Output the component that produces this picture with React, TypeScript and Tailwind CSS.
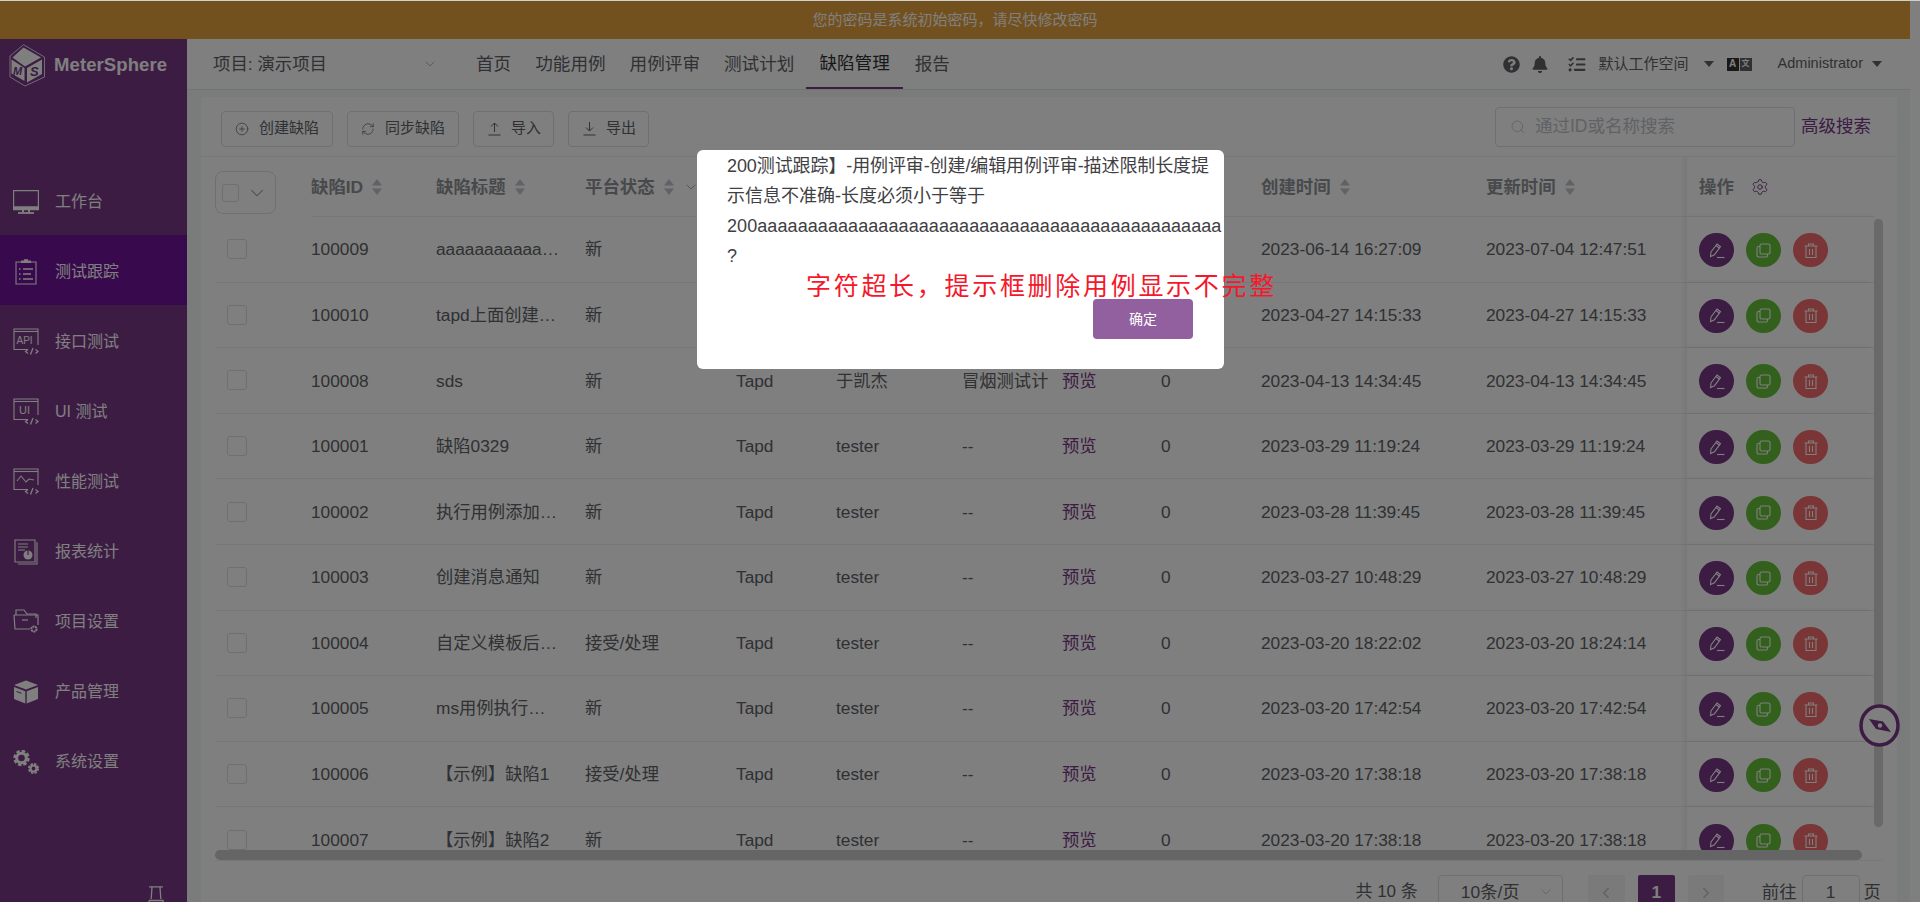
import { ChevronDown, ChevronLeft, ChevronRight, CirclePlus, RefreshCw, Search, Settings } from "lucide-react";
import { FaBell, FaQuestionCircle } from "react-icons/fa";
import { FaListCheck } from "react-icons/fa6";

const navItems = ["首页", "功能用例", "用例评审", "测试计划", "缺陷管理", "报告"];

// widths of the columns that the dialog covers in the header
const hiddenColumns = ["w-[100px]", "w-[126px]", "w-[100px]", "w-[99px]", "w-[100px]"];

const rows = [
  ["100009", "aaaaaaaaaaa…", "新", "", "", "", "2023-06-14 16:27:09", "2023-07-04 12:47:51"],
  ["100010", "tapd上面创建…", "新", "", "", "", "2023-04-27 14:15:33", "2023-04-27 14:15:33"],
  ["100008", "sds", "新", "Tapd", "于凯杰", "冒烟测试计", "2023-04-13 14:34:45", "2023-04-13 14:34:45"],
  ["100001", "缺陷0329", "新", "Tapd", "tester", "--", "2023-03-29 11:19:24", "2023-03-29 11:19:24"],
  ["100002", "执行用例添加…", "新", "Tapd", "tester", "--", "2023-03-28 11:39:45", "2023-03-28 11:39:45"],
  ["100003", "创建消息通知", "新", "Tapd", "tester", "--", "2023-03-27 10:48:29", "2023-03-27 10:48:29"],
  ["100004", "自定义模板后…", "接受/处理", "Tapd", "tester", "--", "2023-03-20 18:22:02", "2023-03-20 18:24:14"],
  ["100005", "ms用例执行…", "新", "Tapd", "tester", "--", "2023-03-20 17:42:54", "2023-03-20 17:42:54"],
  ["100006", "【示例】缺陷1", "接受/处理", "Tapd", "tester", "--", "2023-03-20 17:38:18", "2023-03-20 17:38:18"],
  ["100007", "【示例】缺陷2", "新", "Tapd", "tester", "--", "2023-03-20 17:38:18", "2023-03-20 17:38:18"],
];

function Logo() {
  return (
    <svg width="38" height="43" viewBox="0 0 38 43" fill="none">
      <path d="M14.5 .7 35.5 13v20L16 42 1 33V12Z" stroke="#fff" strokeWidth="0.8" />
      <path d="M14.5 3.5 32 13.5 16 22.5 3.5 13.5Z" fill="#fff" />
      <path d="M2.5 15.5 15.5 24v13L2.5 29.500Z" fill="#fff" />
      <path d="M18 24 33 15.500V30L18 38.500Z" fill="#fff" />
      <text x="4" y="31" fontSize="11" fontWeight="700" fontStyle="italic" fill="#783887" fontFamily="Liberation Sans">M</text>
      <text x="21" y="32" fontSize="13" fontWeight="700" fontStyle="italic" fill="#783887" fontFamily="Liberation Sans">S</text>
    </svg>
  );
}

function WindowIcon({ children }: { children: React.ReactNode }) {
  return (
    <svg width="26" height="27" viewBox="0 0 26 27" fill="none" stroke="#fff" strokeWidth="1.1">
      <path d="M15 21.500H1V1h24v16" />
      <path d="M1 3.500h24" />
      {children}
      <path d="M15 21.500l-2.500 2 2.500 2M22.500 21.500l2.500 2-2.500 2M20 20l-2.500 6.500" strokeWidth="1.3" />
    </svg>
  );
}

function SideIcon({ name }: { name: string }) {
  if (name === "工作台") {
    return (
      <svg width="26" height="24" viewBox="0 0 26 24" fill="none" stroke="#fff" strokeWidth="1.2">
        <path d="M.6.6h24.800v19H.6Z" />
        <path d="M.6 18h24.800" strokeWidth="3.500" />
        <path d="M10 20v2M16 20v2" strokeWidth="2" />
        <path d="M5 23h16" strokeWidth="1.800" />
      </svg>
    );
  }
  if (name === "测试跟踪") {
    return (
      <svg width="22" height="26" viewBox="0 0 22 26" fill="none" stroke="#fff" strokeWidth="1.1">
        <path d="M7 3H1v22h20V3h-6" />
        <path d="M6.500 3.500V2h3V.8h3V2h3v1.500Z" fill="#fff" />
        <path d="M8 10h10M8 15h8M8 20h10" strokeWidth="1.300" />
        <path d="M4 10h1.500M4 15h1.500M4 20h1.500" strokeWidth="1.300" />
      </svg>
    );
  }
  if (name === "接口测试") {
    return (
      <WindowIcon>
        <text x="3.500" y="15.500" fontSize="10" fill="#fff" stroke="none" fontFamily="Liberation Sans">API</text>
      </WindowIcon>
    );
  }
  if (name === "UI 测试") {
    return (
      <WindowIcon>
        <text x="6" y="16" fontSize="11" fill="#fff" stroke="none" fontFamily="Liberation Sans">UI</text>
      </WindowIcon>
    );
  }
  if (name === "性能测试") {
    return (
      <WindowIcon>
        <path d="M4 13l4-5 5 6 3-3 5 1" />
      </WindowIcon>
    );
  }
  if (name === "报表统计") {
    return (
      <svg width="24" height="26" viewBox="0 0 24 26" fill="none" stroke="#fff" strokeWidth="1.1">
        <path d="M1 1h20v22H1Z" />
        <path d="M23 3v22H4" />
        <path d="M4 5h10M4 8h10M4 11h7" strokeWidth="1.200" />
        <circle cx="14" cy="16" r="4.500" fill="#fff" stroke="none" />
        <path d="M14 16V10.500h5.500" stroke="#783887" />
      </svg>
    );
  }
  if (name === "项目设置") {
    return (
      <svg width="26" height="25" viewBox="0 0 26 25" fill="none" stroke="#fff" strokeWidth="1.2">
        <path d="M3 6V1h8l3 4h9v4" />
        <path d="M1 6h24v10M17 20H2L1 6" />
        <path d="M9 11h6" />
        <circle cx="21" cy="20" r="2.600" strokeWidth="2" strokeDasharray="2 .6" />
      </svg>
    );
  }
  if (name === "产品管理") {
    return (
      <svg width="26" height="24" viewBox="0 0 26 24" fill="#fff">
        <path d="M13 .5 25 5l-12 4.500L1 5Z" />
        <path d="M1 7l11.300 4.200V23.500L1 19Z" />
        <path d="M25 7l-11.300 4.200V23.500L25 19Z" />
        <path d="M3.500 11.500l5 1.800" stroke="#783887" strokeWidth="1" />
      </svg>
    );
  }
  return (
    <svg width="26" height="24" viewBox="0 0 26 24" fill="none" stroke="#fff">
      <circle cx="8.500" cy="8" r="4.800" strokeWidth="3" />
      <circle cx="8.500" cy="8" r="7" strokeWidth="2.400" strokeDasharray="3.500 1.990" />
      <circle cx="20.500" cy="18.500" r="3" strokeWidth="2.200" />
      <circle cx="20.500" cy="18.500" r="4.600" strokeWidth="1.800" strokeDasharray="2.400 1.210" />
    </svg>
  );
}

function Pin() {
  return (
    <svg width="16" height="18" viewBox="0 0 16 18" fill="none" stroke="#fff" strokeWidth="1.300">
      <path d="M1 .8h14M4 1l-.8 12M12 1l.8 12M1 14.500h14L15 18M1 14.500 1 18" />
    </svg>
  );
}

function Caret() {
  return (
    <svg width="10" height="6" viewBox="0 0 10 6" fill="#606266">
      <path d="M0 0h10L5 6Z" />
    </svg>
  );
}

function SortCaret() {
  return (
    <svg width="12" height="16" viewBox="0 0 12 16" fill="#c0c4cc" className="ml-[8px]">
      <path d="M6 0l5 6.500H1Z" />
      <path d="M6 16l5-6.500H1Z" />
    </svg>
  );
}

function Translate() {
  return (
    <div className="flex gap-[1px] font-bold leading-[12px] text-white">
      <span className="flex h-[13px] w-[12px] items-center justify-center bg-[#303133] text-[10px]">A</span>
      <span className="flex h-[13px] w-[12px] items-center justify-center bg-[#606266] text-[8px]">文</span>
    </div>
  );
}

function UpDownIcon({ down }: { down?: boolean }) {
  return (
    <svg width="13" height="15" viewBox="0 0 13 15" fill="none" stroke="#606266" strokeWidth="1">
      {down ? <path d="M6.500 1v9M3 6.500l3.500 3.500L10 6.500" /> : <path d="M6.500 11V2M3 5.500 6.500 2 10 5.500" />}
      <path d="M.5 14h12" />
    </svg>
  );
}

function ToolButton({ width, icon, label }: { width: string; icon: React.ReactNode; label: string }) {
  return (
    <button className={`mt-[4px] flex h-[36px] ${width} items-center gap-[10px] rounded-[4px] border border-[#dcdfe6] pl-[13px] text-[15px] text-[#606266]`}>
      <span className="flex w-[14px] justify-center">{icon}</span>
      {label}
    </button>
  );
}

function CheckBox({ className }: { className: string }) {
  return <div className={`rounded-[3px] border border-[#dcdfe6] bg-white ${className}`} />;
}

function HeaderCell({ width, label }: { width: string; label?: string }) {
  return (
    <div className={`flex h-full items-center border-b border-[#ebeef5] pt-[1px] text-[17.4px] font-bold text-[#909399] ${width}`}>
      {label}
      {label && <SortCaret />}
    </div>
  );
}

function ActionButtons() {
  return (
    <div className="flex gap-[12px]">
      <div className="flex h-[34px] w-[35px] items-center justify-center rounded-full bg-[#783887]">
        <svg width="16" height="17" viewBox="0 0 16 17" fill="none" stroke="#fff" strokeWidth="1.100">
          <path d="M1.500 14.500 2 10l6-8 3.500 2.700-6 8Z" />
          <path d="M7 3.500l3.500 2.700" />
          <path d="M8 15.500h7.500" />
        </svg>
      </div>
      <div className="flex h-[34px] w-[35px] items-center justify-center rounded-full bg-[#67c23a]">
        <svg width="15" height="15" viewBox="0 0 15 15" fill="none" stroke="#fff" strokeWidth="1.100">
          <rect x="4" y="1" width="10" height="10" rx="1.500" />
          <path d="M4 3.500H2.500A1.500 1.500 0 0 0 1 5v7.500A1.500 1.500 0 0 0 2.500 14H10a1.500 1.500 0 0 0 1.500-1.500V11" />
        </svg>
      </div>
      <div className="flex h-[34px] w-[35px] items-center justify-center rounded-full bg-[#f56c6c]">
        <svg width="14" height="15" viewBox="0 0 14 15" fill="none" stroke="#fff" strokeWidth="1.100">
          <path d="M.5 3h13M4.500 3V1h5v2M2 3v11.500h10V3M5.500 6v6M8.500 6v6" />
        </svg>
      </div>
    </div>
  );
}

function Sidebar() {
  const items = ["工作台", "测试跟踪", "接口测试", "UI 测试", "性能测试", "报表统计", "项目设置", "产品管理", "系统设置"];
  return (
    <aside className="flex h-[863px] w-[187px] shrink-0 flex-col bg-[#783887] text-white">
      <div className="flex h-[126px] shrink-0 items-start gap-[7px] pl-[9px] pt-[5px]">
        <Logo />
        <span className="mt-[9px] text-[18.500px] font-bold leading-[24px] tracking-[0.1px]">MeterSphere</span>
      </div>
      {items.map((item) => (
        <div key={item} className={`flex h-[70px] shrink-0 items-center pt-[3px] ${item === "测试跟踪" ? "bg-[#701298]" : ""}`}>
          <div className="flex w-[55px] shrink-0 justify-center pr-[3px]">
            <SideIcon name={item} />
          </div>
          <span className="text-[16px]">{item}</span>
        </div>
      ))}
      <div className="ml-[148px] mt-auto h-[16px] overflow-hidden">
        <Pin />
      </div>
    </aside>
  );
}

function TopBar() {
  return (
    <header className="flex h-[51px] shrink-0 items-center border-b border-[#e6e6e6] pl-[26px] pr-[28px]">
      <span className="w-[214px] pt-[1px] text-[17.400px] text-[#606266]">项目: 演示项目</span>
      <ChevronDown className="-ml-[5px] h-[16px] w-[16px] text-[#a0a4aa]" strokeWidth={1.200} />
      <div className="ml-[38px] flex h-full gap-[24px]">
        {navItems.map((item) => (
          <div
            key={item}
            className={`flex h-full items-center text-[17.600px] ${
              item === "缺陷管理"
                ? "-mx-[12px] border-b-2 border-[#783887] px-[13px] text-[#303133]"
                : "text-[#606266]"
            }`}
          >
            {item}
          </div>
        ))}
      </div>
      <div className="ml-auto flex items-center text-[#606266]">
        <FaQuestionCircle className="h-[17px] w-[17px]" />
        <FaBell className="ml-[12px] h-[17px] w-[16px]" />
        <FaListCheck className="ml-[20px] h-[17px] w-[18px]" />
        <span className="ml-[13px] text-[15px]">默认工作空间</span>
        <span className="ml-[15px]">
          <Caret />
        </span>
        <span className="ml-[13px]">
          <Translate />
        </span>
        <span className="ml-[26px] text-[14.500px]">Administrator</span>
        <span className="ml-[9px]">
          <Caret />
        </span>
      </div>
    </header>
  );
}

function BugTable() {
  return (
    <div className="relative mx-[14px]">
      <div className="h-[693px] w-[1659px] overflow-hidden">
        <div className="flex h-[60px]">
          <div className="w-[96px] shrink-0 pt-[14px]">
            <div className="flex h-[43px] w-[61px] items-center rounded-[8px] border border-[#dcdfe6] pl-[6px]">
              <CheckBox className="h-[18px] w-[17px]" />
              <ChevronDown className="ml-[7px] h-[22px] w-[22px] text-[#909399]" strokeWidth={1.100} />
            </div>
          </div>
          <HeaderCell width="w-[125px]" label="缺陷ID" />
          <HeaderCell width="w-[149px]" label="缺陷标题" />
          <div className="flex h-full w-[151px] items-center border-b border-[#ebeef5] pt-[1px] text-[17.400px] font-bold text-[#909399]">
            平台状态
            <SortCaret />
            <ChevronDown className="ml-[8px] h-[16px] w-[16px] text-[#909399]" strokeWidth={1.200} />
          </div>
          {hiddenColumns.map((width, i) => (
            <HeaderCell key={i} width={width} />
          ))}
          <HeaderCell width="w-[225px]" label="创建时间" />
          <HeaderCell width="w-[201px]" label="更新时间" />
          <div className="flex h-full w-[187px] items-center border-b border-[#ebeef5] bg-white pt-[1px] pl-[12px] text-[17.400px] font-bold text-[#909399] shadow-[-3px_0_6px_rgba(0,0,0,0.08)]">
            操作
            <Settings className="ml-[17px] h-[18px] w-[18px] text-[#783887]" strokeWidth={1.300} />
          </div>
        </div>
        {rows.map((row, i) => (
          <div key={row[0]} className="flex h-[65.600px] items-center border-b border-[#ebeef5] text-[17.300px] text-[#606266]">
            <div className="w-[96px] shrink-0 pl-[12px]">
              <CheckBox className="h-[20px] w-[20px]" />
            </div>
            <div className="w-[125px] pt-[2px]">{row[0]}</div>
            <div className="w-[149px] pt-[2px]">{row[1]}</div>
            <div className="w-[151px] pt-[2px]">{row[2]}</div>
            <div className="w-[100px] pt-[2px]">{row[3]}</div>
            <div className="w-[126px] pt-[2px]">{row[4]}</div>
            <div className="w-[100px] whitespace-nowrap pt-[2px]">{row[5]}</div>
            <div className="w-[99px] pt-[2px] text-[#783887]">{i > 1 && "预览"}</div>
            <div className="w-[100px] pt-[2px]">{i > 1 && "0"}</div>
            <div className="w-[225px] pt-[2px]">{row[6]}</div>
            <div className="w-[201px] pt-[2px]">{row[7]}</div>
            <div className="flex h-full w-[187px] items-center bg-white pl-[12px] pt-[2px] shadow-[-3px_0_6px_rgba(0,0,0,0.08)]">
              <ActionButtons />
            </div>
          </div>
        ))}
      </div>
      <div className="h-[11px] border-b border-[#ebeef5]">
        <div className="h-[10px] w-[1647px] rounded-full bg-[#cacaca]" />
      </div>
      <div className="absolute left-[1659px] top-[62px] h-[608px] w-[9px] rounded-full bg-[#d2d2d2]" />
    </div>
  );
}

function Pagination() {
  return (
    <div className="flex items-start justify-end pr-[16px] pt-[14px] text-[17.400px] leading-[20px] text-[#606266]">
      <span className="pt-[7px] text-[17px]">共 10 条</span>
      <div className="ml-[20px] flex h-[36px] w-[125px] items-center justify-between rounded-[4px] border border-[#dcdfe6] pb-[2px] pl-[22px] pr-[8px]">
        10条/页
        <ChevronDown className="h-[16px] w-[16px] text-[#c0c4cc]" strokeWidth={1.300} />
      </div>
      <div className="ml-[25px] flex h-[36px] w-[37px] items-center justify-center rounded-[2px] bg-[#f4f4f5] text-[#c0c4cc]">
        <ChevronLeft className="h-[18px] w-[18px]" />
      </div>
      <div className="ml-[13px] flex h-[36px] w-[37px] items-center justify-center rounded-[2px] bg-[#783887] pb-[2px] font-bold text-white">1</div>
      <div className="ml-[13px] flex h-[36px] w-[36px] items-center justify-center rounded-[2px] bg-[#f4f4f5] text-[#c0c4cc]">
        <ChevronRight className="h-[18px] w-[18px]" />
      </div>
      <span className="ml-[38px] pt-[7px]">前往</span>
      <div className="ml-[5px] flex h-[36px] w-[58px] items-center justify-center rounded-[4px] border border-[#dcdfe6] pb-[2px]">1</div>
      <span className="ml-[4px] pt-[7px]">页</span>
    </div>
  );
}

function Compass() {
  return (
    <svg width="41" height="43" viewBox="0 0 41 43" className="absolute left-[1859px] top-[704px]">
      <ellipse cx="20.500" cy="21.500" rx="18.500" ry="19.500" fill="#fff" stroke="#783887" strokeWidth="3.500" />
      <path d="M10 15 24 17.500 32 28 17 25Z" fill="#783887" />
      <circle cx="21" cy="21.500" r="2.200" fill="#fff" />
    </svg>
  );
}

export default function App() {
  return (
    <div className="relative h-[902px] w-[1920px] overflow-hidden bg-white font-['Liberation_Sans','Noto_Sans_CJK_SC',sans-serif]">
      <div className="relative z-20 h-[1px] bg-[#d0d0d0]" />
      <div className="flex h-[38px] w-[1910px] items-center justify-center bg-[#e6a23c] text-[15px] text-white">
        您的密码是系统初始密码，请尽快修改密码
      </div>
      <div className="flex w-[1910px]">
        <Sidebar />
        <div className="flex h-[863px] min-w-0 flex-1 flex-col">
          <TopBar />
          <main className="min-h-0 flex-1 bg-[#f5f6f7] pl-[14px] pr-[13px] pt-[7px]">
            <div className="rounded-[4px] bg-white">
              <div className="flex h-[60px] items-center gap-[14px] border-b border-[#ebeef5] pl-[20px] pr-[26px]">
                <ToolButton width="w-[112px]" icon={<CirclePlus className="h-[14px] w-[14px]" strokeWidth={1.200} />} label="创建缺陷" />
                <ToolButton width="w-[112px]" icon={<RefreshCw className="h-[14px] w-[14px]" strokeWidth={1.200} />} label="同步缺陷" />
                <ToolButton width="w-[81px]" icon={<UpDownIcon />} label="导入" />
                <ToolButton width="w-[81px]" icon={<UpDownIcon down />} label="导出" />
                <div className="ml-auto flex h-[40px] w-[300px] items-center rounded-[4px] border border-[#dcdfe6] pl-[14px] text-[17.500px] text-[#c0c4cc]">
                  <Search className="h-[16px] w-[16px]" strokeWidth={1.300} />
                  <span className="ml-[9px]">通过ID或名称搜索</span>
                </div>
                <span className="-ml-[8px] text-[17.500px] text-[#783887]">高级搜索</span>
              </div>
              <BugTable />
              <Pagination />
            </div>
          </main>
        </div>
      </div>
      <Compass />
      <div className="absolute inset-x-0 bottom-0 top-[1px] z-10 bg-black/50" />
      <div className="absolute left-[697px] top-[150px] z-20 h-[219px] w-[527px] rounded-[6px] bg-white pl-[30px] pt-[1px] text-[18px] leading-[30px] text-[#3f4044]">
        <div className="whitespace-nowrap tracking-[-0.1px]">200测试跟踪】-用例评审-创建/编辑用例评审-描述限制长度提</div>
        <div className="whitespace-nowrap">示信息不准确-长度必须小于等于</div>
        <div className="whitespace-nowrap tracking-[0.08px]">200aaaaaaaaaaaaaaaaaaaaaaaaaaaaaaaaaaaaaaaaaaaaaa</div>
        <div>?</div>
        <div className="flex justify-end pr-[31px] pt-[28px]">
          <button className="h-[40px] w-[100px] rounded-[4px] bg-[#93609f] text-[14px] text-white">确定</button>
        </div>
      </div>
      <div className="absolute left-[806px] top-[274px] z-30 whitespace-nowrap text-[25px] leading-[25px] tracking-[2.700px] text-[#f5182c]">
        字符超长，提示框删除用例显示不完整
      </div>
    </div>
  );
}
